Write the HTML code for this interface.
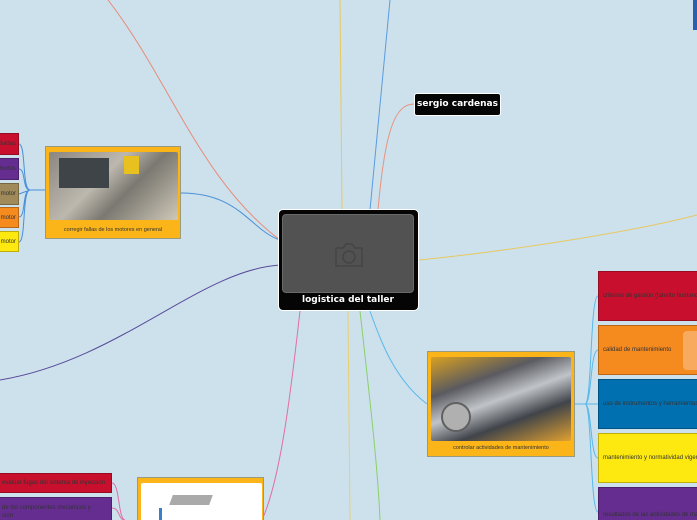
<!DOCTYPE html>
<html style="width:697px;height:520px;overflow:hidden"><head><meta charset="utf-8"><style>
*{margin:0;padding:0;box-sizing:border-box}
html,body{width:697px;height:520px;overflow:hidden}
body{background:#cce1ec;position:relative;font-family:"Liberation Sans",sans-serif}
.abs{position:absolute}
.box{position:absolute;font-size:6px;color:#333;display:flex;align-items:center;white-space:nowrap;overflow:hidden;border:1px solid rgba(0,0,0,.25)}
svg{position:absolute;left:0;top:0}
</style></head><body>
<div class="abs" style="left:0;top:0;width:697px;height:520px;overflow:hidden">
<svg width="697" height="520" fill="none" stroke-width="1">
<path d="M108 0 C170 80,200 180,280 240" stroke="#e88b7a"/>
<path d="M390 0 L370 210" stroke="#5b9ae0"/>
<path d="M340 0 L342 210" stroke="#e8c860"/>
<path d="M414 104 C395 104,385 130,378 210" stroke="#e8937e"/>
<path d="M181 193 C240 193,250 230,280 240" stroke="#4a8fd8"/>
<path d="M0 380 C120 360,200 270,280 265" stroke="#5a4a9a"/>
<path d="M419 260 C520 250,640 230,697 215" stroke="#e8c860"/>
<path d="M370 311 C380 340,395 380,427 404" stroke="#5ab8ea"/>
<path d="M300 311 C290 400,280 480,262 520" stroke="#e26ea0"/>
<path d="M348 311 L350 520" stroke="#e8d070"/>
<path d="M360 311 C370 400,378 470,380 520" stroke="#8ccf6a"/>
<path d="M45 190 L30 190" stroke="#4a8fd8"/>
<path d="M30 190 C22 190,26 144,19 144 M30 190 C22 190,26 169,19 169 M30 190 L19 194 M30 190 C22 190,26 217,19 217 M30 190 C22 190,26 242,19 242" stroke="#4a8fd8"/>
<path d="M575 404 L585 404 M585 404 C592 404,590 296,598 296 M585 404 C592 404,590 350,598 350 M585 404 L598 404 M585 404 C592 404,590 458,598 458 M585 404 C592 404,590 512,598 512" stroke="#5ab8ea"/>
<path d="M112 483 C120 483,118 520,125 520 M112 508 C120 508,118 520,125 520" stroke="#e26ea0"/>
</svg>
<div class="abs" style="left:278px;top:209px;width:141px;height:102px;background:#050505;border:1.5px solid #fff;border-radius:5px">
<div class="abs" style="left:3px;top:4px;width:132px;height:79px;background:#525252;border:1px solid #6a6a6a;border-radius:4px"></div>
<svg class="abs" style="left:54px;top:32px" width="32" height="26" viewBox="0 0 32 26"><path d="M3 6h7l3-4h6l3 4h7v18H3z" stroke="#444" stroke-width="1.5" fill="none"/><circle cx="16" cy="15" r="6" stroke="#444" stroke-width="1.5" fill="none"/></svg>
<div class="abs" style="left:0;top:85px;width:138px;text-align:center;color:#fff;font-weight:bold;font-size:9px;font-family:'DejaVu Sans',sans-serif">logistica del taller</div>
</div>
<div class="abs" style="left:414px;top:93px;width:87px;height:23px;background:#050505;border:1px solid #fff;border-radius:3px;color:#fff;font-weight:bold;font-size:9px;font-family:'DejaVu Sans',sans-serif;text-align:center;line-height:21px">sergio cardenas</div>
<div class="abs" style="left:45px;top:146px;width:136px;height:93px;background:#fbb519;border:1px solid #9a9a80">
<div class="abs" style="left:3px;top:5px;width:129px;height:68px;background:linear-gradient(135deg,#8a8680,#bdb8ae 40%,#7a7870 60%,#cfc8b8);border-radius:2px">
<div class="abs" style="left:10px;top:6px;width:50px;height:30px;background:#3e4448"></div>
<div class="abs" style="left:75px;top:4px;width:15px;height:18px;background:#e8c020"></div>
</div>
<div class="abs" style="left:0;top:80px;width:134px;text-align:center;font-size:5.5px;color:#333">corregir fallas de los motores en general</div>
</div>
<div class="box" style="left:-3px;top:133px;width:22px;height:22px;background:#c8102e;justify-content:flex-end;padding-right:2px">fluidas</div>
<div class="box" style="left:-3px;top:158px;width:22px;height:22px;background:#662d91;justify-content:flex-end;padding-right:2px">motos</div>
<div class="box" style="left:-3px;top:183px;width:22px;height:22px;background:#a08a5a;justify-content:flex-end;padding-right:2px">motor</div>
<div class="box" style="left:-3px;top:207px;width:22px;height:21px;background:#f58a1f;justify-content:flex-end;padding-right:2px">motor</div>
<div class="box" style="left:-3px;top:231px;width:22px;height:21px;background:#fde910;justify-content:flex-end;padding-right:2px">motor</div>
<div class="abs" style="left:427px;top:351px;width:148px;height:106px;background:#fbb519;border:1px solid #9a9a80">
<div class="abs" style="left:3px;top:5px;width:140px;height:84px;background:linear-gradient(160deg,#d9a020,#5a5a60 30%,#c0c4c8 50%,#40444a 70%,#e0a030);border-radius:2px">
<div class="abs" style="left:10px;top:45px;width:30px;height:30px;border-radius:50%;background:#b0b0b0;border:2px solid #606060"></div>
</div>
<div class="abs" style="left:0;top:93px;width:146px;text-align:center;font-size:5.5px;color:#333">controlar actividades de mantenimiento</div>
</div>
<div class="box" style="left:598px;top:271px;width:105px;height:50px;background:#c8102e;padding-left:4px">criterios de gestion (talento humano</div>
<div class="box" style="left:598px;top:325px;width:105px;height:50px;background:#f58a1f;padding-left:4px">calidad de mantenimiento<div class="abs" style="left:84px;top:5px;width:20px;height:39px;background:#f8aa60;border-radius:4px"></div></div>
<div class="box" style="left:598px;top:379px;width:105px;height:50px;background:#0070b0;padding-left:4px">uso de instrumentos y herramientas</div>
<div class="box" style="left:598px;top:433px;width:105px;height:50px;background:#fde910;padding-left:4px">mantenimiento y normatividad vigente</div>
<div class="box" style="left:598px;top:487px;width:105px;height:33px;background:#662d91;padding-left:4px;align-items:flex-end;padding-bottom:2px;border-bottom:none">resultados de las actividades de mantenimiento</div>
<div class="box" style="left:-2px;top:473px;width:114px;height:20px;background:#c8102e;padding-left:3px">evaluar fugas del sistema de inyeccion</div>
<div class="box" style="left:-2px;top:497px;width:114px;height:23px;background:#662d91;padding-left:3px;align-items:flex-start;padding-top:6px;white-space:normal;line-height:8px;border-bottom:none">de los componentes mecanicos y<br>cion</div>
<div class="abs" style="left:137px;top:477px;width:127px;height:43px;background:#fbb519;border:1px solid #9a9a80;border-bottom:none;overflow:hidden">
<div class="abs" style="left:3px;top:5px;width:121px;height:45px;background:#fff;border-radius:2px">
<div class="abs" style="left:30px;top:12px;width:40px;height:10px;background:#aaa;transform:skewX(-20deg)"></div>
<div class="abs" style="left:18px;top:25px;width:3px;height:20px;background:#3a80c8"></div>
</div>
</div>
<div class="abs" style="left:693px;top:0;width:4px;height:30px;background:#2a60b0"></div>
</div>
</body></html>
